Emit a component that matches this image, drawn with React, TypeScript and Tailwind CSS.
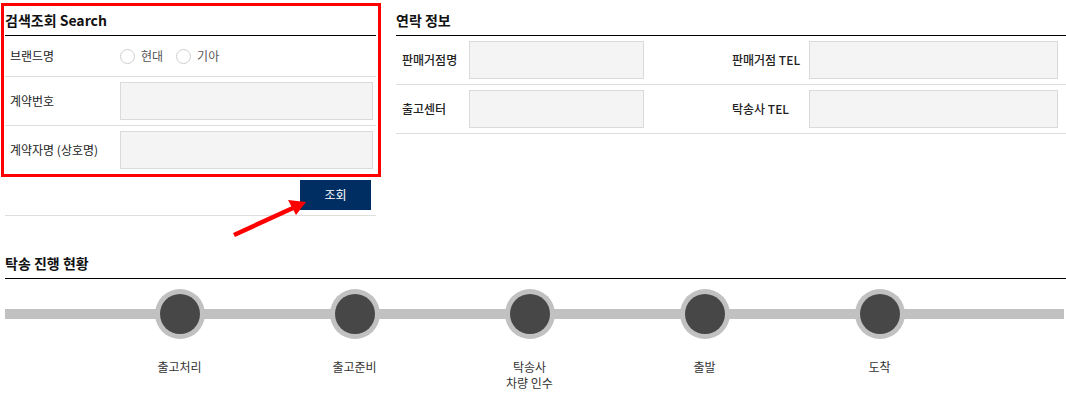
import React from 'react'

const font = { fontFamily: '"Noto Sans CJK KR", "Noto Sans", sans-serif' }

const steps = [['출고처리'], ['출고준비'], ['탁송사', '차량 인수'], ['출발'], ['도착']]

const Input = ({ className = '' }: { className?: string }) => (
  <div className={`h-[38px] bg-[#f4f4f4] border border-[#dadada] ${className}`} />
)

const SectionTitle = ({ children }: { children: React.ReactNode }) => (
  <div className="pt-[12px] pb-[6px] leading-[17px] text-[14px] font-bold text-[#111] border-b border-black">
    {children}
  </div>
)

const Radio = ({ label }: { label: string }) => (
  <label className="flex items-center gap-[6px] text-[12px] text-[#555]">
    <span className="w-[15px] h-[15px] rounded-full border border-[#cfcfcf] bg-white" />
    {label}
  </label>
)

export default function App() {
  return (
    <div className="relative w-[1066px] h-[398px] bg-white text-[#333] overflow-hidden" style={font}>
      {/* top area */}
      <div className="flex pl-[5px] gap-[20px]">
        {/* search */}
        <div className="relative w-[371px]">
          <SectionTitle>검색조회 Search</SectionTitle>
          <div className="flex items-center h-[41px] border-b border-[#dedede]">
            <div className="w-[115px] pl-[5px] text-[12px] text-[#222]">브랜드명</div>
            <div className="flex items-center gap-[13px]">
              <Radio label="현대" />
              <Radio label="기아" />
            </div>
          </div>
          <div className="flex items-center py-[5px] border-b border-[#dedede]">
            <div className="w-[115px] pl-[5px] text-[12px] text-[#222]">계약번호</div>
            <Input className="w-[253px]" />
          </div>
          <div className="flex items-center py-[5px] border-b border-[#dedede]">
            <div className="w-[115px] pl-[5px] text-[12px] text-[#222]">계약자명 (상호명)</div>
            <Input className="w-[253px]" />
          </div>
          <div className="flex justify-end pt-[5px] pb-[5px] pr-[5px] border-b border-[#dedede]">
            <button className="w-[71px] h-[30px] bg-[#002d62] text-white text-[12px]">조회</button>
          </div>
          {/* red annotation box */}
          <div className="absolute -left-[4px] top-[3px] w-[380px] h-[174px] border-[3px] border-[#ff0000] pointer-events-none" />
        </div>

        {/* contact */}
        <div className="w-[670px]">
          <SectionTitle>연락 정보</SectionTitle>
          {[
            ['판매거점명', '판매거점 TEL'],
            ['출고센터', '탁송사 TEL'],
          ].map(([a, b]) => (
            <div key={a} className="flex items-center py-[5px] border-b border-[#dedede]">
              <div className="w-[73px] pl-[6px] text-[12px] font-medium text-[#222]">{a}</div>
              <Input className="w-[175px]" />
              <div className="ml-[82px] w-[83px] pl-[6px] text-[12px] font-medium text-[#222]">{b}</div>
              <Input className="w-[249px]" />
            </div>
          ))}
        </div>
      </div>

      {/* progress */}
      <div className="mt-[27px] pl-[5px]">
        <SectionTitle>탁송 진행 현황</SectionTitle>
        <div className="relative w-[1059px] mt-[10px]">
          <div className="absolute left-0 right-0 top-[20px] h-[10px] bg-[#c1c1c1]" />
          <ul className="relative flex pl-[87px]">
            {steps.map((lines) => (
              <li key={lines[0]} className="w-[175px] flex flex-col items-center">
                <div className="w-[50px] h-[50px] rounded-full bg-[#c1c1c1] p-[5px]">
                  <div className="w-full h-full rounded-full bg-[#474747]" />
                </div>
                <div className="mt-[20px] text-[12px] leading-[16px] text-center text-[#333]">
                  {lines.map((l) => (
                    <div key={l}>{l}</div>
                  ))}
                </div>
              </li>
            ))}
          </ul>
        </div>
      </div>

      {/* red annotation arrow */}
      <svg className="absolute left-[225px] top-[195px]" width="90" height="50" viewBox="0 0 90 50">
        <line x1="9" y1="40" x2="68" y2="13" stroke="#ff0000" strokeWidth="4.5" />
        <polygon points="81,7 71,20 63,5" fill="#ff0000" />
      </svg>
    </div>
  )
}
